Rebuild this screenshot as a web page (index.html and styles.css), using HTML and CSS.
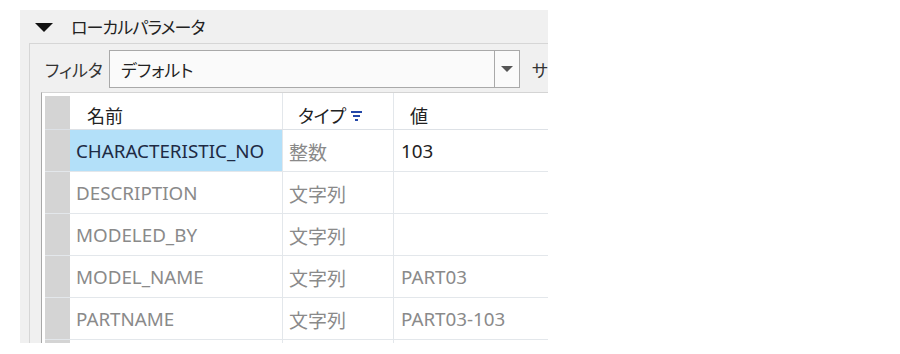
FILE: index.html
```html
<!DOCTYPE html>
<html lang="ja">
<head>
<meta charset="utf-8">
<link rel="stylesheet" href="styles.css">
</head>
<body>
<div class="panel">
  <div class="panel-head">
    <span class="caret"></span>
    <span class="title">ローカルパラメータ</span>
  </div>
  <div class="box">
    <div class="filter-row">
      <span class="filter-label">フィルタ</span>
      <div class="combo">
        <span class="combo-text">デフォルト</span>
        <span class="combo-btn"><span class="combo-arrow"></span></span>
      </div>
      <span class="extra">サ</span>
    </div>
    <div class="table">
      <div class="row head">
        <div class="rh"></div>
        <div class="c name">名前</div>
        <div class="c type">タイプ<svg class="funnel" width="11" height="11" viewBox="0 0 11 11"><rect x="0" y="1" width="11" height="2" fill="#2448a8"/><rect x="2" y="5" width="7" height="2" fill="#2448a8"/><rect x="4" y="9" width="3" height="2" fill="#2448a8"/></svg></div>
        <div class="c val">値</div>
      </div>
      <div class="row">
        <div class="rh"></div>
        <div class="c name sel">CHARACTERISTIC_NO</div>
        <div class="c type">整数</div>
        <div class="c val dark">103</div>
      </div>
      <div class="row">
        <div class="rh"></div>
        <div class="c name">DESCRIPTION</div>
        <div class="c type">文字列</div>
        <div class="c val"></div>
      </div>
      <div class="row">
        <div class="rh"></div>
        <div class="c name">MODELED_BY</div>
        <div class="c type">文字列</div>
        <div class="c val"></div>
      </div>
      <div class="row">
        <div class="rh"></div>
        <div class="c name">MODEL_NAME</div>
        <div class="c type">文字列</div>
        <div class="c val">PART03</div>
      </div>
      <div class="row">
        <div class="rh"></div>
        <div class="c name">PARTNAME</div>
        <div class="c type">文字列</div>
        <div class="c val">PART03-103</div>
      </div>
      <div class="row">
        <div class="rh"></div>
        <div class="c name"></div>
        <div class="c type"></div>
        <div class="c val"></div>
      </div>
    </div>
  </div>
</div>
</body>
</html>
```

FILE: styles.css
```css
html, body {
  margin: 0;
  padding: 0;
  background: #ffffff;
}
body {
  font-family: "Noto Sans", "Noto Sans CJK JP", sans-serif;
  font-feature-settings: "palt";
}
.panel {
  margin: 10px 0 0 20px;
  width: 528px;
  height: 333px;
  background: #f0f0f0;
  overflow: hidden;
  display: flex;
  flex-direction: column;
}
.panel-head {
  height: 33px;
  display: flex;
  align-items: center;
  padding-left: 15px;
  flex: none;
}
.caret {
  width: 0;
  height: 0;
  border-left: 9px solid transparent;
  border-right: 9px solid transparent;
  border-top: 9px solid #111;
  margin-right: 18px;
  margin-top: 2px;
}
.title {
  font-size: 17px;
  letter-spacing: -0.9px;
  color: #222;
  font-family: "Noto Sans CJK JP", sans-serif;
}
.box {
  margin-left: 9px;
  border-top: 1px solid #d6d6d6;
  border-left: 1px solid #d6d6d6;
  flex: 1;
  display: flex;
  flex-direction: column;
  padding-top: 6px;
  min-height: 0;
}
.filter-row {
  display: flex;
  align-items: center;
  height: 38px;
  flex: none;
  padding-left: 15px;
}
.filter-label {
  font-size: 17px;
  color: #333;
  font-family: "Noto Sans CJK JP", sans-serif;
  width: 65px;
}
.combo {
  width: 415px;
  height: 36px;
  border: 1px solid #a9a9a9;
  background: #fafafa;
  display: flex;
  align-items: center;
}
.combo-text {
  flex: 1;
  padding-left: 11px;
  font-size: 17px;
  color: #222;
  font-family: "Noto Sans CJK JP", sans-serif;
}
.combo-btn {
  width: 24px;
  height: 36px;
  border-left: 1px solid #a9a9a9;
  display: flex;
  align-items: center;
  justify-content: center;
}
.combo-arrow {
  width: 0;
  height: 0;
  border-left: 6px solid transparent;
  border-right: 6px solid transparent;
  border-top: 6px solid #555;
}
.extra {
  margin-left: 12px;
  font-size: 17px;
  color: #333;
  font-family: "Noto Sans CJK JP", sans-serif;
}
.table {
  margin: 4px 0 0 11px;
  border-top: 1px solid #d4d4d4;
  border-left: 1px solid #a8a8a8;
  background: #ffffff;
  padding-left: 3px;
  flex: 1;
  display: flex;
  flex-direction: column;
  min-height: 0;
}
.row {
  display: flex;
  height: 42px;
  flex: none;
  border-bottom: 1px solid #e3e7eb;
  box-sizing: border-box;
}
.row.head {
  height: 37px;
  border-bottom: 1px solid #dde1e6;
}
.rh {
  width: 25px;
  background: #d4d4d4;
  flex: none;
}
.row.head .rh {
  margin-top: 3px;
}
.c {
  display: flex;
  align-items: center;
  font-size: 18.8px;
  color: #8a8a8a;
  box-sizing: border-box;
  white-space: nowrap;
  padding-top: 1px;
}
.name {
  width: 213px;
  padding-left: 6px;
  border-right: 1px solid #e3e7eb;
  flex: none;
}
.type {
  width: 111px;
  padding-left: 6px;
  border-right: 1px solid #e3e7eb;
  flex: none;
  font-family: "Noto Sans CJK JP", sans-serif;
  font-size: 19px;
}
.val {
  flex: 1;
  padding-left: 7px;
}
.head .c {
  color: #222;
  font-family: "Noto Sans CJK JP", sans-serif;
  font-size: 18px;
  padding-top: 7px;
}
.head .name {
  padding-left: 17px;
}
.head .type {
  padding-left: 15px;
}
.head .val {
  padding-left: 16px;
}
.funnel {
  margin-left: 5px;
  margin-top: 1px;
}
.sel {
  background: #b3e0f9;
  color: #1e2a44;
}
.dark {
  color: #222;
}
```
